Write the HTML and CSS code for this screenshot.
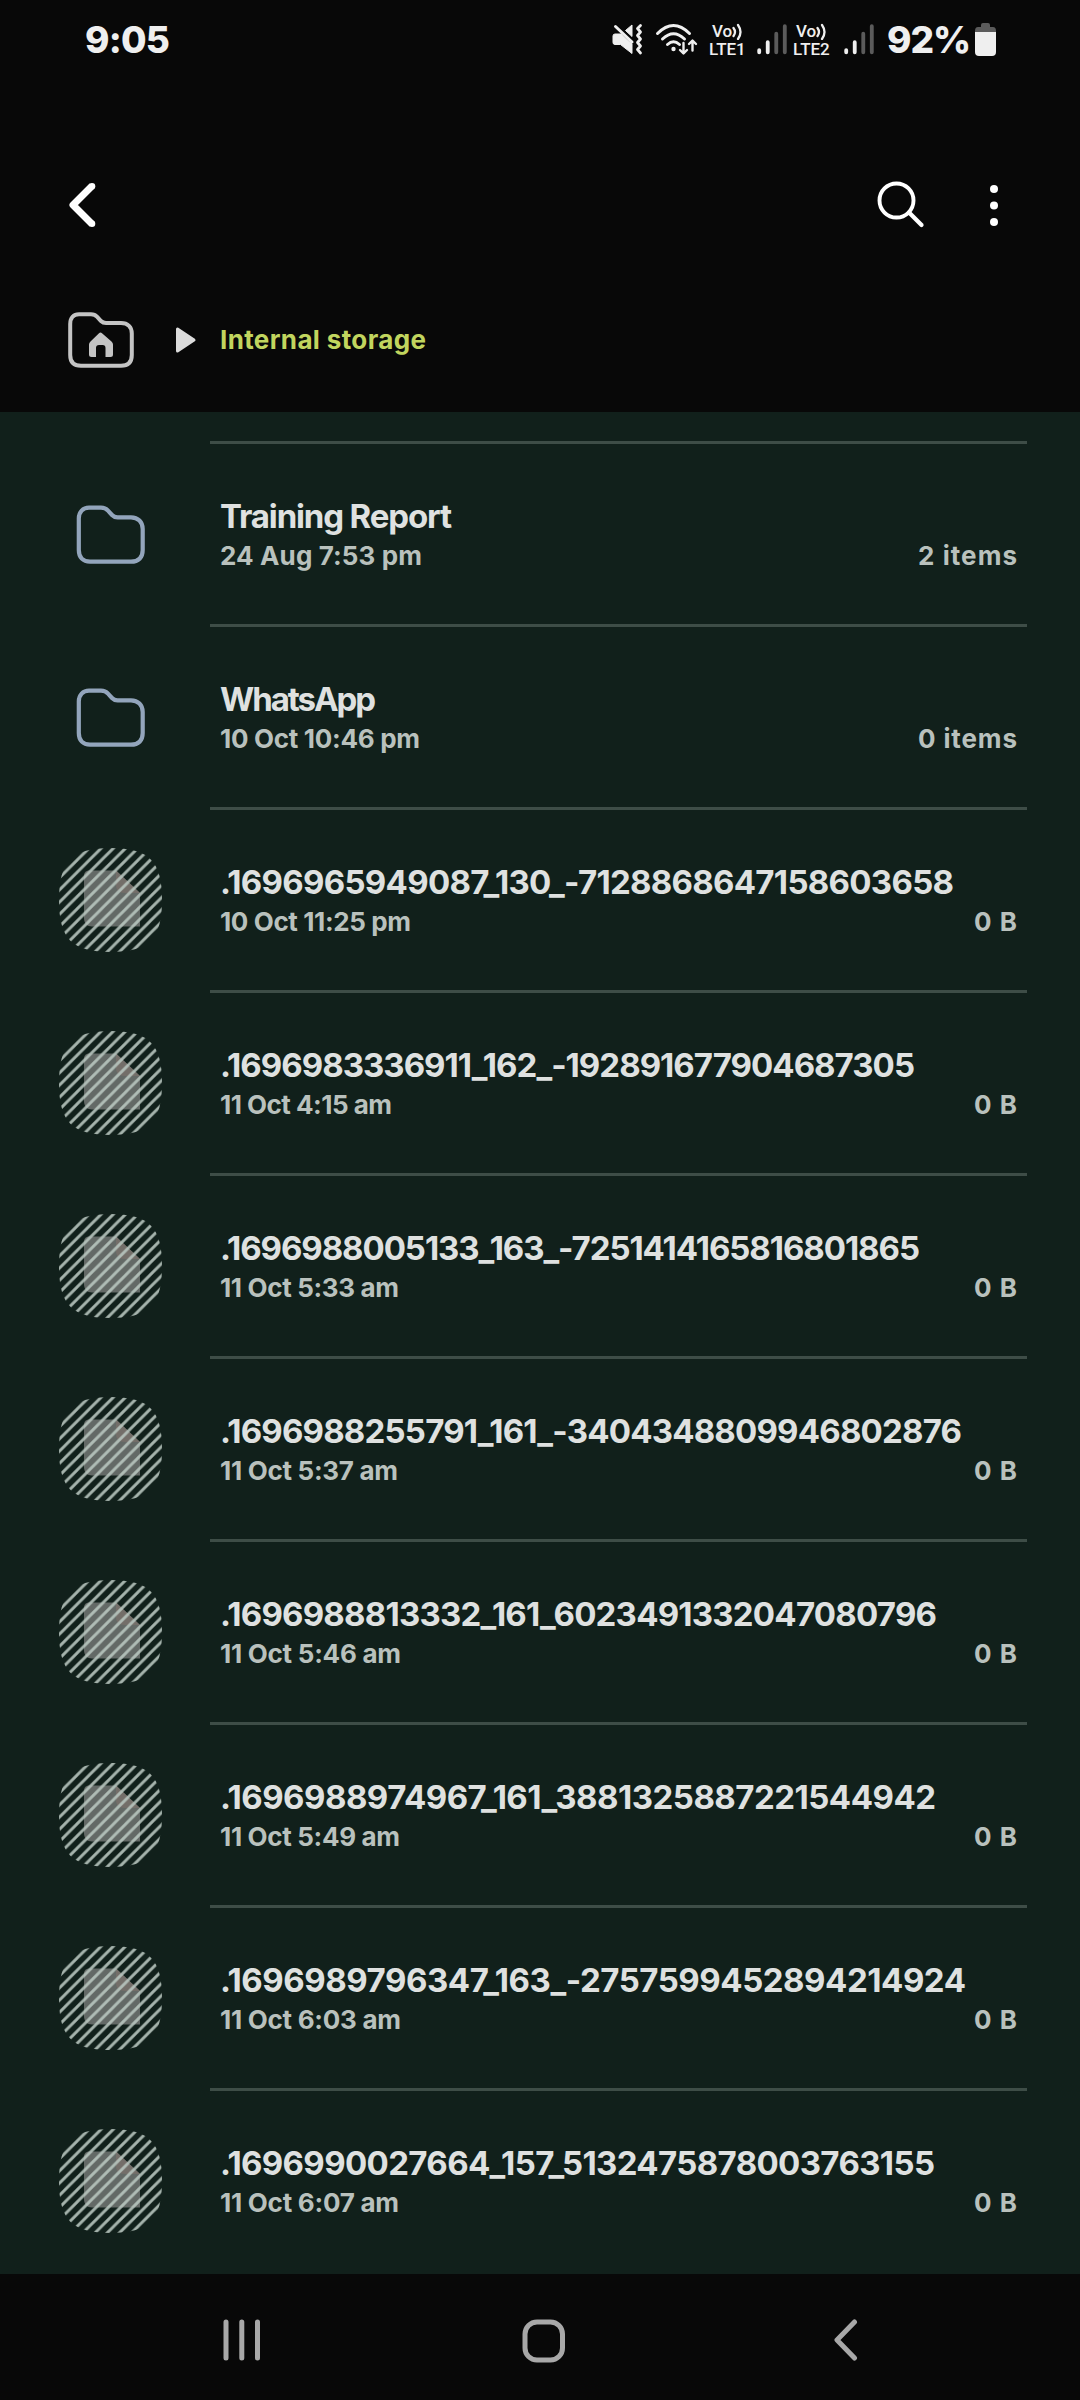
FILE: index.html
```html
<!DOCTYPE html>
<html lang="en">
<head>
    <meta charset="UTF-8">
    <meta name="viewport" content="width=device-width, initial-scale=1.0">
    <title>My Files</title>
    <link rel="stylesheet" href="styles.css">
</head>
<body>

    <!-- Shared icons -->
    <svg class="defs" width="0" height="0">
        <defs>
            <clipPath id="squircle">
                <path d="M51.500 0C90 0 103 13 103 52S90 104 51.500 104S0 91 0 52S13 0 51.500 0Z"/>
            </clipPath>
            <pattern id="stripes" width="12.190" height="12.190" patternUnits="userSpaceOnUse" patternTransform="translate(5.820 0)">
                <path d="M-3 3L3 -3M-3 15.190L15.190 -3M9.190 15.190L15.190 9.190" stroke="#b9c7c0" stroke-width="2.900"/>
            </pattern>
        </defs>
        <symbol id="folder" viewBox="0 0 104 104">
            <path d="M30 25.700H42C45 25.700 47 26.500 49 28.700L53 33C54.500 34.600 56 35.300 58.500 35.300H72C79 35.300 83.700 40 83.700 47V68C83.700 75.500 79.500 79.700 72 79.700H31C24 79.700 19.800 75.500 19.800 68V36.500C19.800 30 24 25.700 30 25.700Z" fill="none" stroke="#93a5bc" stroke-width="4.200"/>
        </symbol>
        <symbol id="file" viewBox="0 0 104 104">
            <path d="M31 22.500H57L81 45V78.500H33C28 78.500 25 75 25 70V28C25 24 27 22.500 31 22.500Z" fill="#636966"/>
            <path d="M57 22.500L81 45H66C60 45 57 42 57 37Z" fill="#736e69"/>
            <rect width="104" height="104" fill="url(#stripes)" clip-path="url(#squircle)" opacity="0.880"/>
        </symbol>
        <symbol id="bars" viewBox="0 0 28 30">
            <g fill="none" stroke-width="3.600" stroke-linecap="round">
                <path d="M2 25.500V27.500M10 18V27.500" stroke="#efefef"/>
                <path d="M18 10V27.500M26 3V27.500" stroke="#5b5b5b"/>
            </g>
        </symbol>
    </svg>

    <header class="statusbar">
        <span class="clock" data-width="85">9:05</span>
        <div class="indicators">
            <svg class="mute" width="31" height="34" viewBox="0 0 31 34">
                <path d="M3 12H9L20 22V31.500L8.500 22.500H3Q1 22.500 1 20.500V14Q1 12 3 12ZM13.500 8.500L20 3V14.500Z" fill="#efefef" stroke="#efefef" stroke-linejoin="round"/>
                <path d="M3.500 4.500L20 20" stroke="#efefef" stroke-width="3" stroke-linecap="round"/>
                <path d="M28.500 3.500L25.500 6.500L28.500 10L25.500 13.500L28.500 17L25.500 20.500L28.500 24L25.500 27.500L28.500 31" fill="none" stroke="#efefef" stroke-width="2.800" stroke-linecap="round" stroke-linejoin="round"/>
            </svg>
            <svg class="wifi" width="44" height="34" viewBox="0 0 44 34">
                <g fill="none" stroke="#efefef" stroke-width="3" stroke-linecap="round" stroke-linejoin="round">
                    <path d="M2.500 11.500Q18.500 -4.500 34.500 11.500M7.500 17Q18.500 6.500 29.500 17M12.500 22.500Q18.500 17 24.500 22.500"/>
                    <path d="M28.500 21V31M25 28L28.500 31.500L32 28M37.500 28.500V19.500M34 22L37.500 18.500L41 22" stroke-width="2.400"/>
                </g>
                <circle cx="18.500" cy="27" r="2.200" fill="#efefef"/>
            </svg>
            <div class="volte">
                <div class="vo"><span>Vo</span><svg width="12" height="18" viewBox="0 0 12 18"><path d="M1.500 6Q4.500 10 1.500 14M6 3Q11 10 6 17" fill="none" stroke="#efefef" stroke-width="2.300" stroke-linecap="round"/></svg></div>
                <div class="lte">LTE1</div>
            </div>
            <svg class="signal" width="30" height="32"><use href="#bars"/></svg>
            <div class="volte second">
                <div class="vo"><span>Vo</span><svg width="12" height="18" viewBox="0 0 12 18"><path d="M1.500 6Q4.500 10 1.500 14M6 3Q11 10 6 17" fill="none" stroke="#efefef" stroke-width="2.300" stroke-linecap="round"/></svg></div>
                <div class="lte">LTE2</div>
            </div>
            <svg class="signal" width="30" height="32"><use href="#bars"/></svg>
            <span class="percent" data-width="84">92%</span>
            <svg class="battery" width="21" height="33" viewBox="0 0 21 33">
                <path d="M6 2Q6 0 8 0H13Q15 0 15 2V4H18Q21 4 21 8V10H0V8Q0 4 3 4H6Z" fill="#5b5b5b"/>
                <path d="M0 9H21V29Q21 33 17 33H4Q0 33 0 29Z" fill="#efefef"/>
            </svg>
        </div>
    </header>

    <nav class="toolbar">
        <svg class="back" width="32" height="48" viewBox="0 0 32 48">
            <path d="M26 5L7 24L26 43" fill="none" stroke="#fff" stroke-width="7" stroke-linecap="butt" stroke-linejoin="round"/>
            <circle cx="26" cy="5.300" r="3.300" fill="#fff"/>
            <circle cx="26" cy="42.700" r="3.300" fill="#fff"/>
        </svg>
        <svg class="search" width="48" height="48" viewBox="0 0 48 48">
            <circle cx="19.500" cy="20.500" r="17" fill="none" stroke="#fff" stroke-width="3.900"/>
            <path d="M32 32.500L44.500 45" stroke="#fff" stroke-width="4.200" stroke-linecap="round"/>
        </svg>
        <svg class="more" width="10" height="42" viewBox="0 0 10 42" fill="#fff">
            <circle cx="5" cy="5" r="4"/>
            <circle cx="5" cy="21.500" r="4"/>
            <circle cx="5" cy="38" r="4"/>
        </svg>
    </nav>

    <div class="breadcrumb">
        <svg class="home" width="68" height="58" viewBox="0 0 68 58">
            <path d="M12 3.200H24C26.500 3.200 28.500 4 30 5.700L34 10C35.500 11.500 37 12 39 12H54C61 12 64.800 16 64.800 22.500V44C64.800 51 61 54.700 54 54.700H14C7 54.700 3.200 51 3.200 44V13C3.200 7 6.500 3.200 12 3.200Z" fill="none" stroke="#c4c4c4" stroke-width="4"/>
            <path d="M33.500 21.500Q34.300 21.500 35 22.200L44.500 30.500Q46 31.800 46 33.500V43.500Q46 46 43.500 46H38.500V37Q38.500 34 35.700 34H32Q29 34 29 37V46H24.500Q22 46 22 43.500V33.500Q22 31.800 23.500 30.500L32 22.200Q32.700 21.500 33.500 21.500Z" fill="#c4c4c4"/>
        </svg>
        <svg class="arrow" width="22" height="28" viewBox="0 0 22 28">
            <path d="M2.500 3V25L19 14Z" fill="#dcdcdc" stroke="#dcdcdc" stroke-width="3" stroke-linejoin="round"/>
        </svg>
        <span class="crumb" data-width="206">Internal storage</span>
    </div>

    <main class="files">
        <div class="row">
            <svg class="thumb"><use href="#folder"/></svg>
            <div class="info">
                <div class="name" data-width="232">Training Report</div>
                <div class="meta"><span data-width="202">24 Aug 7:53 pm</span><span data-width="99">2 items</span></div>
            </div>
        </div>
        <div class="row">
            <svg class="thumb"><use href="#folder"/></svg>
            <div class="info">
                <div class="name" data-width="156">WhatsApp</div>
                <div class="meta"><span data-width="200">10 Oct 10:46 pm</span><span data-width="99">0 items</span></div>
            </div>
        </div>
        <div class="row">
            <svg class="thumb"><use href="#file"/></svg>
            <div class="info">
                <div class="name" data-width="734">.1696965949087_130_-7128868647158603658</div>
                <div class="meta"><span data-width="191">10 Oct 11:25 pm</span><span data-width="43">0 B</span></div>
            </div>
        </div>
        <div class="row">
            <svg class="thumb"><use href="#file"/></svg>
            <div class="info">
                <div class="name" data-width="695">.1696983336911_162_-192891677904687305</div>
                <div class="meta"><span data-width="172">11 Oct 4:15 am</span><span data-width="43">0 B</span></div>
            </div>
        </div>
        <div class="row">
            <svg class="thumb"><use href="#file"/></svg>
            <div class="info">
                <div class="name" data-width="700">.1696988005133_163_-7251414165816801865</div>
                <div class="meta"><span data-width="179">11 Oct 5:33 am</span><span data-width="43">0 B</span></div>
            </div>
        </div>
        <div class="row">
            <svg class="thumb"><use href="#file"/></svg>
            <div class="info">
                <div class="name" data-width="742">.1696988255791_161_-3404348809946802876</div>
                <div class="meta"><span data-width="178">11 Oct 5:37 am</span><span data-width="43">0 B</span></div>
            </div>
        </div>
        <div class="row">
            <svg class="thumb"><use href="#file"/></svg>
            <div class="info">
                <div class="name" data-width="717">.1696988813332_161_6023491332047080796</div>
                <div class="meta"><span data-width="181">11 Oct 5:46 am</span><span data-width="43">0 B</span></div>
            </div>
        </div>
        <div class="row">
            <svg class="thumb"><use href="#file"/></svg>
            <div class="info">
                <div class="name" data-width="716">.1696988974967_161_3881325887221544942</div>
                <div class="meta"><span data-width="180">11 Oct 5:49 am</span><span data-width="43">0 B</span></div>
            </div>
        </div>
        <div class="row">
            <svg class="thumb"><use href="#file"/></svg>
            <div class="info">
                <div class="name" data-width="746">.1696989796347_163_-2757599452894214924</div>
                <div class="meta"><span data-width="181">11 Oct 6:03 am</span><span data-width="43">0 B</span></div>
            </div>
        </div>
        <div class="row">
            <svg class="thumb"><use href="#file"/></svg>
            <div class="info">
                <div class="name" data-width="715">.1696990027664_157_5132475878003763155</div>
                <div class="meta"><span data-width="179">11 Oct 6:07 am</span><span data-width="43">0 B</span></div>
            </div>
        </div>
    </main>

    <footer class="navbar">
        <svg class="recents" width="38" height="42" viewBox="0 0 38 42">
            <path d="M3 3V39M18.800 3V39M34.500 3V39" stroke="#a8a8a8" stroke-width="5" stroke-linecap="round"/>
        </svg>
        <svg class="home-key" width="44" height="44" viewBox="0 0 44 44">
            <rect x="3" y="3" width="37.500" height="38" rx="12" fill="none" stroke="#a8a8a8" stroke-width="5"/>
        </svg>
        <svg class="back-key" width="26" height="42" viewBox="0 0 26 42">
            <path d="M21.500 3L4 21L21.500 39" fill="none" stroke="#a8a8a8" stroke-width="5" stroke-linecap="round" stroke-linejoin="round"/>
        </svg>
    </footer>

    <script>
        // Track each label out to the width set in data-width
        document.querySelectorAll('[data-width]').forEach(el => {
            const range = document.createRange();
            range.selectNodeContents(el);
            const natural = range.getBoundingClientRect().width;
            const spacing = (Number(el.dataset.width) - natural) / (el.textContent.length - 1);
            el.style.letterSpacing = spacing + 'px';
            el.style.marginRight = -spacing + 'px';
        });
    </script>

</body>
</html>
```

FILE: styles.css
```css
* {
    box-sizing: border-box;
}

body {
    margin: 0;
    width: 1080px;
    height: 2400px;
    background-color: #080808;
    color: #dfe1e0;
    font-family: "Inter", "Roboto", sans-serif;
    font-weight: 700;
    display: flex;
    flex-direction: column;
    overflow: hidden;
}

svg {
    display: block;
    flex: none;
}

/* Status bar */
.statusbar {
    height: 88px;
    display: flex;
    justify-content: space-between;
    padding: 0 84px 0 85px;
    color: #efefef;
    white-space: nowrap;
}

.clock,
.percent {
    font-size: 37px;
    font-weight: 800;
    line-height: 45px;
    padding-top: 17px;
}

.indicators {
    display: flex;
    align-items: flex-start;
}

.mute {
    margin-top: 22px;
}

.wifi {
    margin: 22px 0 0 12px;
}

.volte {
    width: 39px;
    margin: 22px 0 0 10px;
    font-family: "Roboto", sans-serif;
    font-weight: 500;
    font-size: 17px;
    line-height: 18px;
}

.volte.second {
    width: 42px;
    margin-left: 6px;
}

.vo {
    display: flex;
    height: 18px;
    padding-left: 3px;
}

.signal {
    margin: 23px 0 0 9px;
}

.percent {
    margin-left: 13px;
}

.battery {
    margin: 23px 0 0 4px;
}

/* Toolbar */
.toolbar {
    height: 212px;
    display: flex;
    padding: 93px 81px 0 66px;
}

.search {
    margin: -1px 0 0 auto;
}

.more {
    margin: 3px 0 0 64px;
}

/* Breadcrumb */
.breadcrumb {
    height: 112px;
    display: flex;
    padding: 11px 0 0 67px;
}

.arrow {
    margin: 15px 0 0 40px;
}

.crumb {
    margin: 10px 0 0 23px;
    font-size: 26px;
    line-height: 38px;
    color: #c1d55e;
    white-space: nowrap;
}

/* File list */
.files {
    height: 1862px;
    padding: 29px 53px 0 0;
    background-color: #11201b;
}

.files::before {
    content: "";
    display: block;
    height: 3px;
    margin-left: 210px;
    background-color: #3e4d47;
}

.row {
    height: 183px;
    display: flex;
}

.thumb {
    width: 104px;
    height: 104px;
    margin: 38px 47px 0 59px;
}

.info {
    flex: 1;
    padding: 53px 10px 0 10px;
    border-bottom: 3px solid #3e4d47;
    white-space: nowrap;
}

.row:last-child .info {
    border-bottom: none;
}

.name {
    font-size: 33px;
    line-height: 39px;
}

.meta {
    display: flex;
    justify-content: space-between;
    font-size: 26px;
    line-height: 39px;
    color: #b9c1bd;
}

/* Navigation keys */
.navbar {
    flex: 1;
    display: flex;
    padding: 45px 0 0 223px;
}

.home-key {
    margin-left: 261px;
}

.back-key {
    margin-left: 267px;
}
```
